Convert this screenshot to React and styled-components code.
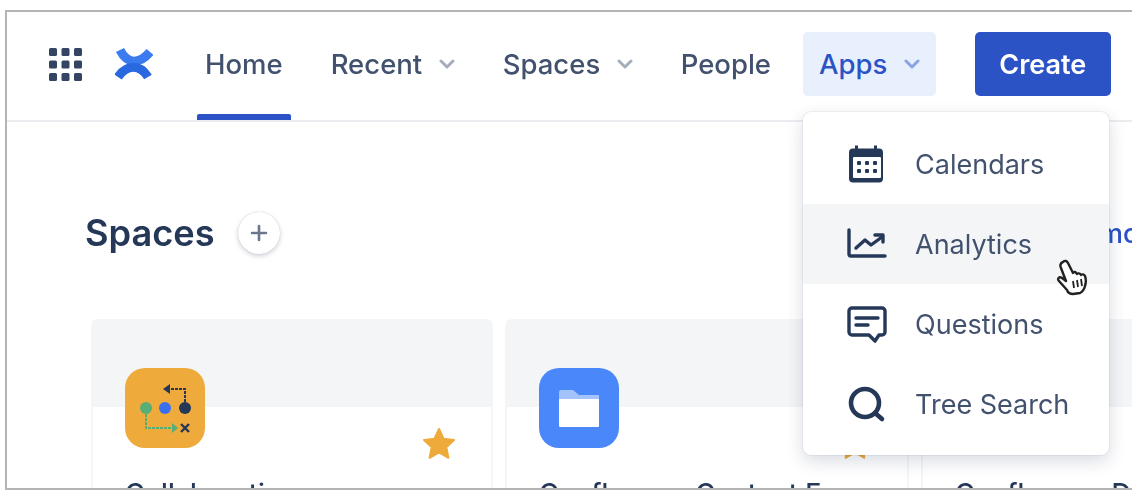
import React from "react"
import styled, {createGlobalStyle} from "styled-components"

const GlobalStyle = createGlobalStyle`
  html, body {
    margin: 0;
    background: #fff;
    font-family: Inter, "Liberation Sans", sans-serif;
  }
`

const Frame = styled.div`
  box-sizing: border-box;
  position: relative;
  margin: 10px 0 0 5px;
  height: 480px;
  border: 2px solid #b4b4b4;
  border-right: 0;
  overflow: hidden;
  filter: blur(0.7px);
`

const Nav = styled.nav`
  position: relative;
  z-index: 2;
  box-sizing: content-box;
  display: flex;
  align-items: center;
  height: 64px;
  padding: 20px 0 24px 42px;
  border-bottom: 2px solid #ebecf0;
`

const Brand = styled.div`
  display: flex;
  align-items: center;
  gap: 33px;
  margin-right: 36px;
`

const NavItems = styled.div`
  display: flex;
  gap: 16px;
`

const NavItem = styled.div`
  position: relative;
  display: flex;
  align-items: center;
  gap: 16.5px;
  height: 64px;
  padding: 0 16px;
  border-radius: 5px;
  font-size: 27.5px;
  font-weight: 500;
  color: ${p => (p.$open ? "#2b53c5" : "#42526e")};
  background: ${p => (p.$open ? "#e8f0fd" : "transparent")};
  &::after {
    content: "";
    display: ${p => (p.$current ? "block" : "none")};
    position: absolute;
    left: 8px;
    right: 8px;
    bottom: -24px;
    height: 6px;
    border-radius: 2px 2px 0 0;
    background: #2b53c5;
  }
`

const CreateButton = styled.button`
  height: 64px;
  width: 136px;
  margin-left: 39px;
  border: 0;
  border-radius: 5px;
  background: #2b53c5;
  color: #fff;
  font-family: inherit;
  font-size: 27px;
  font-weight: 600;
`

const Menu = styled.div`
  position: absolute;
  top: 80px;
  left: 0;
  width: 306px;
  padding: 12px 0 11px;
  border-radius: 8px;
  background: #fff;
  box-shadow: 0 6px 18px rgba(9, 30, 66, 0.16), 0 0 2px rgba(9, 30, 66, 0.18);
`

const MenuRow = styled.div`
  position: relative;
  display: flex;
  align-items: center;
  gap: 28px;
  height: 80px;
  padding-left: 44px;
  font-size: 27px;
  font-weight: 400;
  color: #42526e;
  background: ${p => (p.$hover ? "#f4f5f7" : "transparent")};
`

const Pointer = styled.svg`
  position: absolute;
  left: 253px;
  top: 54px;
  z-index: 1;
`

const Main = styled.main`
  padding: 90px 0 0 78px;
`

const SpacesHeader = styled.div`
  display: flex;
  align-items: center;
  justify-content: space-between;
  width: 1080px;
  height: 42px;
`

const TitleGroup = styled.div`
  display: flex;
  align-items: center;
  gap: 23px;
`

const Title = styled.h1`
  margin: 0;
  font-size: 36.2px;
  font-weight: 600;
  color: #253858;
`

const AddButton = styled.div`
  width: 42px;
  height: 42px;
  display: flex;
  align-items: center;
  justify-content: center;
  border-radius: 50%;
  background: #fff;
  box-shadow: 0 2px 5px rgba(9, 30, 66, 0.2), 0 0 1px rgba(9, 30, 66, 0.25);
`

const MoreLink = styled.a`
  flex-shrink: 0;
  font-size: 27px;
  font-weight: 500;
  color: #2b53c5;
`

const Cards = styled.div`
  display: grid;
  grid-template-columns: 402px 404px 403px;
  gap: 12px;
  margin: 65px 0 0 6px;
`

const Card = styled.article`
  border: 2px solid #f4f5f7;
  border-radius: 7px 7px 0 0;
  height: 240px;
`

const CardCover = styled.div`
  height: 86px;
  background: #f4f5f7;
`

const CardBody = styled.div`
  padding: 0 35px 0 32px;
`

const CardTop = styled.div`
  display: flex;
  justify-content: space-between;
  align-items: flex-end;
  height: 80px;
  margin-top: -39px;
`

const SpaceIcon = styled.svg`
  display: block;
  border-radius: 20px;
`

const Star = styled.svg`
  margin-bottom: -13px;
`

const CardTitle = styled.h2`
  margin: 29px 0 0;
  font-size: 27px;
  font-weight: 500;
  color: #253858;
  white-space: nowrap;
`

const Chevron = ({color}) => (
  <svg width="16" height="10" viewBox="0 0 16 10" fill="none">
    <path d="M2 2l6 6 6-6" stroke={color} strokeWidth="3" strokeLinecap="round" strokeLinejoin="round"/>
  </svg>
)

const AppGrid = () => (
  <svg width="33" height="33" viewBox="0 0 33 33" fill="#344563">
    {[0, 12.5, 25].map(y => [0, 12.5, 25].map(x => (
      <rect key={`${x}-${y}`} x={x} y={y} width="8" height="8" rx="1.5"/>
    )))}
  </svg>
)

const Logo = () => (
  <svg width="38" height="36" viewBox="0 0 38 36" fill="none" strokeWidth="9">
    <path d="M5 4C12 18 24 19 35 6" stroke="#3a7bf0"/>
    <path d="M3 31C12 18 25 18 33 31" stroke="#2a68e0"/>
  </svg>
)

const CalendarIcon = () => (
  <svg width="40" height="40" viewBox="0 0 40 40">
    <path fill="#253858" d="M8 1.5h3v3h16v-3h3v3h2a4 4 0 0 1 4 4v26a4 4 0 0 1-4 4H6a4 4 0 0 1-4-4v-26a4 4 0 0 1 4-4h2z"/>
    <rect x="6" y="13" width="28" height="21" rx="1" fill="#fff"/>
    <g fill="#253858">
      {[12, 20, 28].map(x => [19, 27].map(y => (
        <rect key={`${x}-${y}`} x={x - 2} y={y - 2} width="4" height="4" rx="1"/>
      )))}
    </g>
  </svg>
)

const AnalyticsIcon = () => (
  <svg width="40" height="40" viewBox="0 0 40 40" fill="none" stroke="#253858" strokeWidth="3.4" strokeLinecap="round" strokeLinejoin="round">
    <path d="M2 6v24a2 2 0 0 0 2 2h34"/>
    <path d="M9 24l9-8 6 5 11-8"/>
    <path d="M28 11h8v7"/>
  </svg>
)

const QuestionsIcon = () => (
  <svg width="40" height="40" viewBox="0 0 40 40" fill="none" stroke="#253858" strokeWidth="3.4" strokeLinecap="round" strokeLinejoin="round">
    <path d="M5 4h30a3 3 0 0 1 3 3v21a3 3 0 0 1-3 3h-3l-4 6-6-6H5a3 3 0 0 1-3-3V7a3 3 0 0 1 3-3z"/>
    <path d="M9 14h22M9 21h12"/>
  </svg>
)

const SearchIcon = () => (
  <svg width="40" height="40" viewBox="0 0 40 40" fill="none" stroke="#253858" strokeWidth="4.6" strokeLinecap="round">
    <circle cx="18" cy="19" r="14"/>
    <path d="M28 29l7 6"/>
  </svg>
)

const CollabArt = () => (
  <SpaceIcon width="80" height="80" viewBox="0 0 80 80">
    <rect width="80" height="80" fill="#eeaa3a"/>
    <g fill="none" strokeWidth="2" strokeDasharray="3 1">
      <path d="M60 34V21H44" stroke="#253858"/>
      <path d="M21 46v14h26" stroke="#57ae76"/>
    </g>
    <path d="M38 21l7-5v10z" fill="#253858"/>
    <path d="M53 60l-6-5v10z" fill="#57ae76"/>
    <circle cx="21" cy="40" r="6" fill="#57ae76"/>
    <circle cx="40" cy="40" r="6" fill="#3a6ff0"/>
    <circle cx="60" cy="40" r="6" fill="#253858"/>
    <path d="M56 56l8 8M64 56l-8 8" stroke="#253858" strokeWidth="2.4"/>
  </SpaceIcon>
)

const FolderArt = () => (
  <SpaceIcon width="80" height="80" viewBox="0 0 80 80">
    <rect width="80" height="80" fill="#4a88f9"/>
    <path d="M20 24a2 2 0 0 1 2-2h12l6 5h20v6H20z" fill="#a3c3fc"/>
    <rect x="20" y="31" width="40" height="28" rx="1" fill="#fff"/>
  </SpaceIcon>
)

const StarIcon = () => (
  <Star width="34" height="34" viewBox="0 0 34 34">
    <path fill="#eeaa3a" stroke="#eeaa3a" strokeWidth="2" strokeLinejoin="round"
      d="M17 2l4.6 9.8 10.4 1.2-7.7 7.2 2.1 10.6L17 25.4 7.6 30.8l2.1-10.6L2 13l10.4-1.2z"/>
  </Star>
)

const CursorIcon = () => (
  <Pointer width="34" height="38" viewBox="0 0 34 38">
    <path fill="#fff" stroke="#222" strokeWidth="2.4" strokeLinejoin="round"
      d="M7 4c2-2 4-1 5 1l5 10c1-2 3-1 4 1 1-1 3-1 4 1 1-1 3-1 4 1 1 3 1 7 0 10-1 4-3 6-5 7l-7 1c-3 0-5-1-6-4l-8-9c-2-2 0-5 3-3l4 3-5-13c-1-2-1-5 2-6z"/>
    <path d="M17 23l1 7M21 22l1 7M25 21l1 7" stroke="#222" strokeWidth="1.8" fill="none"/>
  </Pointer>
)

const spaces = [
  {name: "Collaboration", art: <CollabArt/>},
  {name: "Confluence Content Farm", art: <FolderArt/>},
  {name: "Confluence Docs", art: <FolderArt/>}
]

const App = () => {
  return (
    <>
      <GlobalStyle/>
      <Frame>
        <Nav>
          <Brand>
            <AppGrid/>
            <Logo/>
          </Brand>
          <NavItems>
            <NavItem $current>Home</NavItem>
            <NavItem>Recent <Chevron color="#a5adba"/></NavItem>
            <NavItem>Spaces <Chevron color="#a5adba"/></NavItem>
            <NavItem>People</NavItem>
            <NavItem $open>
              Apps <Chevron color="#8aa4e3"/>
              <Menu>
                <MenuRow><CalendarIcon/>Calendars</MenuRow>
                <MenuRow $hover><AnalyticsIcon/>Analytics<CursorIcon/></MenuRow>
                <MenuRow><QuestionsIcon/>Questions</MenuRow>
                <MenuRow><SearchIcon/>Tree Search</MenuRow>
              </Menu>
            </NavItem>
          </NavItems>
          <CreateButton>Create</CreateButton>
        </Nav>
        <Main>
          <SpacesHeader>
            <TitleGroup>
              <Title>Spaces</Title>
              <AddButton>
                <svg width="18" height="18" viewBox="0 0 18 18" stroke="#6b778c" strokeWidth="2.6" strokeLinecap="round">
                  <path d="M9 2v14M2 9h14"/>
                </svg>
              </AddButton>
            </TitleGroup>
            <MoreLink>Show more</MoreLink>
          </SpacesHeader>
          <Cards>
            {spaces.map((space, index) => (
              <Card key={index}>
                <CardCover/>
                <CardBody>
                  <CardTop>
                    {space.art}
                    <StarIcon/>
                  </CardTop>
                  <CardTitle>{space.name}</CardTitle>
                </CardBody>
              </Card>
            ))}
          </Cards>
        </Main>
      </Frame>
    </>
  )
}

export default App
